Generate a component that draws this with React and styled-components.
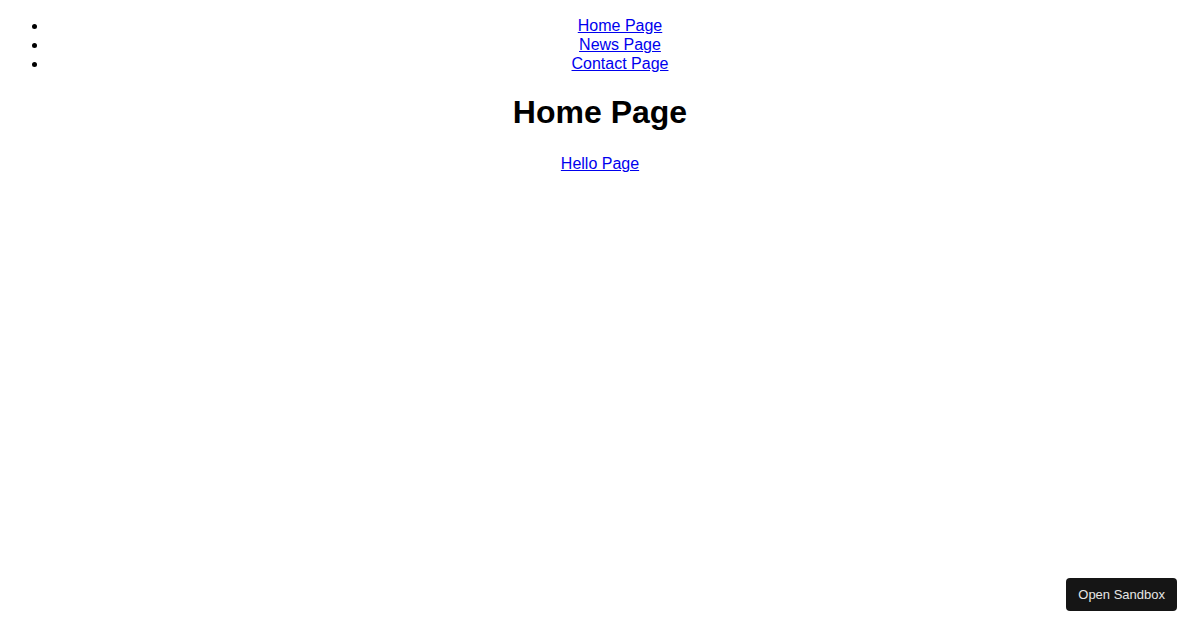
import { createGlobalStyle, styled } from "styled-components";

const GlobalStyle = createGlobalStyle`
  body {
    margin: 8px;
    font-family: "Liberation Sans", Arial, sans-serif;
    background: #fff;
    color: #000;
  }
`;

const NavList = styled.ul`
  margin: 8px 0 16px;
  padding-left: 40px;
  text-align: center;
  line-height: 19px;
`;

const NavLink = styled.a`
  color: #0000ee;
  text-decoration: underline;
`;

const Page = styled.div`
  text-align: center;
`;

const Title = styled.h1`
  font-size: 32px;
  margin: 21px 0;
`;

const Body = styled.p`
  margin: 24px 0 16px;
`;

const SandboxButton = styled.a`
  position: fixed;
  right: 23px;
  bottom: 19px;
  height: 33px;
  padding: 0 12px;
  display: flex;
  align-items: center;
  background: #151515;
  color: #e6e6e6;
  border-radius: 4px;
  font-family: "Liberation Sans", Arial, sans-serif;
  font-size: 13px;
  text-decoration: none;
`;

const links = ["Home Page", "News Page", "Contact Page"];

export default function App() {
  return (
    <>
      <GlobalStyle />
      <NavList>
        {links.map((l) => (
          <li key={l}>
            <NavLink href="#">{l}</NavLink>
          </li>
        ))}
      </NavList>
      <Page>
        <Title>Home Page</Title>
        <Body>
          <NavLink href="#">Hello Page</NavLink>
        </Body>
      </Page>
      <SandboxButton href="#">Open Sandbox</SandboxButton>
    </>
  );
}
